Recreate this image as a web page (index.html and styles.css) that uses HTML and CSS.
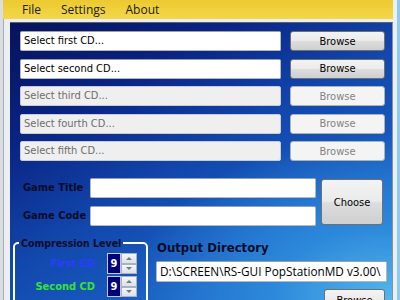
FILE: index.html
```html
<!DOCTYPE html>
<html lang="en">

<head>
    <meta charset="UTF-8">
    <meta name="viewport" content="width=device-width, initial-scale=1.0">
    <title>RS-GUI PopStationMD</title>
    <link rel="stylesheet" href="styles.css">
</head>

<body>
    <div class="window">
        <div class="menubar">
            <span class="menuItem">File</span>
            <span class="menuItem">Settings</span>
            <span class="menuItem">About</span>
        </div>

        <div class="client">
            <div class="panel">
                <!-- CD selection rows -->
                <div class="cdList">
                    <div class="field">Select first CD...</div>
                    <button class="btn">Browse</button>
                    <div class="field">Select second CD...</div>
                    <button class="btn">Browse</button>
                    <div class="field disabled">Select third CD...</div>
                    <button class="btn disabled">Browse</button>
                    <div class="field disabled">Select fourth CD...</div>
                    <button class="btn disabled">Browse</button>
                    <div class="field disabled">Select fifth CD...</div>
                    <button class="btn disabled">Browse</button>
                </div>

                <div class="gameInfo">
                    <div class="comic label">Game Title</div>
                    <div class="field"></div>
                    <button class="btn choose">Choose</button>
                    <div class="comic label">Game Code</div>
                    <div class="field"></div>
                </div>

                <div class="bottom">
                    <fieldset class="compression">
                        <legend class="comic">Compression Level</legend>
                        <div class="levelRow">
                            <span class="comic first">First CD</span>
                            <div class="spin">
                                <div class="spinValue">9</div>
                                <div class="spinBtns">
                                    <div class="spinBtn up"></div>
                                    <div class="spinBtn down"></div>
                                </div>
                            </div>
                        </div>
                        <div class="levelRow">
                            <span class="comic second">Second CD</span>
                            <div class="spin">
                                <div class="spinValue">9</div>
                                <div class="spinBtns">
                                    <div class="spinBtn up"></div>
                                    <div class="spinBtn down"></div>
                                </div>
                            </div>
                        </div>
                    </fieldset>

                    <div class="output">
                        <div class="comic outputLabel">Output Directory</div>
                        <div class="field pathField">D:\SCREEN\RS-GUI PopStationMD v3.00\</div>
                        <button class="btn">Browse</button>
                    </div>
                </div>
            </div>
        </div>
    </div>
</body>

</html>
```

FILE: styles.css
```css
* {
    box-sizing: border-box;
}

body {
    margin: 0;
    width: 400px;
    height: 300px;
    overflow: hidden;
    font-family: "DejaVu Sans Condensed", "Liberation Sans", sans-serif;
    font-size: 11px;
}

.window {
    height: 300px;
    display: flex;
    flex-direction: column;
    background-color: #eceff2;
    border-left: 3px solid #dadee3;
    border-right: 3px solid #8ccaf0;
}

/* Yellow menu strip */
.menubar {
    flex: none;
    height: 19px;
    margin-right: 4px;
    padding-left: 9px;
    display: flex;
    align-items: center;
    background: linear-gradient(#edc931, #f3d749);
    font-family: "Open Sans", sans-serif;
    font-size: 12px;
    color: #1c1c1c;
}

.menuItem {
    padding: 0 10px;
}

.client {
    flex: 1;
    min-height: 0;
    display: flex;
    padding: 3px 4px 0 6px;
    border-left: 1px solid #a8adb3;
}

.panel {
    flex: 1;
    overflow: hidden;
    padding-top: 8px;
    border-top: 1px solid #5c6270;
    border-right: 1px solid #8a9098;
    background:
        radial-gradient(ellipse 70% 60% at 100% 100%, #52b8ee 0%, #2c88da 45%, rgba(30, 110, 210, 0) 100%),
        linear-gradient(150deg, #07125a 0%, #0a2484 25%, #1248ae 50%, #1a60c2 75%, #2274cc 100%);
}

.cdList {
    display: grid;
    grid-template-columns: 261px 95px;
    grid-auto-rows: 20px;
    column-gap: 9px;
    row-gap: 7.5px;
    margin-left: 10px;
}

/* Text boxes */
.field {
    height: 20px;
    padding: 0 3px;
    line-height: 18px;
    white-space: nowrap;
    overflow: hidden;
    color: #000;
    background-color: #fff;
    border: 1px solid #b4b8c0;
    border-top-color: #9a9ea6;
    border-radius: 2px;
}

.field.disabled {
    color: #6d6d6d;
    background-color: #efefef;
    border-color: #c8ccd0;
}

/* Windows 7 style push buttons */
.btn {
    margin: 0;
    padding: 0;
    font-family: inherit;
    font-size: 11px;
    color: #000;
    border: 1px solid #707070;
    border-radius: 3px;
    background: linear-gradient(#f3f3f3 0%, #ebebeb 48%, #dddddd 52%, #cfcfcf 100%);
}

.btn.disabled {
    color: #838383;
    border-color: #adb2b5;
    background: #f4f4f4;
}

.gameInfo {
    display: grid;
    grid-template-columns: 65px 226px 62px;
    grid-template-rows: 20px 20px;
    column-gap: 5px;
    row-gap: 8px;
    margin: 17px 0 0 10px;
}

.comic {
    font-family: "Comic Sans MS", "DejaVu Sans Condensed", sans-serif;
    font-weight: bold;
}

.label {
    padding-left: 3px;
    line-height: 20px;
    color: #0c0c28;
    white-space: nowrap;
}

.choose {
    grid-column: 3;
    grid-row: 1 / 3;
    align-self: center;
    height: 46px;
}

.bottom {
    display: flex;
    align-items: flex-start;
    gap: 8px;
    margin: 10px 0 0 3px;
}

.compression {
    width: 135px;
    min-width: 0;
    margin: 0;
    padding: 3px 9px 6px 4px;
    border: 2px solid #fff;
    border-radius: 5px;
}

.compression legend {
    padding: 0 2px;
    font-size: 10.5px;
    line-height: 14px;
    color: #0c0c28;
}

.levelRow {
    display: flex;
    align-items: center;
    justify-content: flex-end;
    gap: 12px;
    height: 21px;
    margin-bottom: 2px;
}

.first {
    color: #2a3cff;
}

.second {
    color: #36e236;
}

/* Numeric up-down */
.spin {
    display: flex;
    height: 21px;
}

.spinValue {
    width: 14px;
    line-height: 19px;
    text-align: center;
    font-weight: bold;
    color: #fff;
    background-color: #00007c;
    border: 1px solid #c4c8d0;
}

.spinBtns {
    width: 16px;
    display: flex;
    flex-direction: column;
}

.spinBtn {
    flex: 1;
    display: flex;
    align-items: center;
    justify-content: center;
    background: linear-gradient(#f4f6f8, #dde2e8);
    border: 1px solid #aab2bc;
}

.spinBtn::before {
    content: "";
    border-left: 3px solid transparent;
    border-right: 3px solid transparent;
}

.spinBtn.up::before {
    border-bottom: 3px solid #6c7c90;
}

.spinBtn.down::before {
    border-top: 3px solid #6c7c90;
}

.output {
    flex: none;
    width: 231px;
    display: flex;
    flex-direction: column;
    padding-top: 4px;
}

.outputLabel {
    padding-left: 1px;
    font-size: 13px;
    line-height: 16px;
    color: #0c0c28;
}

.output .field {
    height: 21px;
    line-height: 19px;
    margin-top: 5px;
}

.pathField {
    font-family: "Open Sans", sans-serif;
    font-size: 11.8px;
}

.output .btn {
    align-self: flex-end;
    width: 61px;
    height: 23px;
    margin: 7px 2px 0 0;
}
```
